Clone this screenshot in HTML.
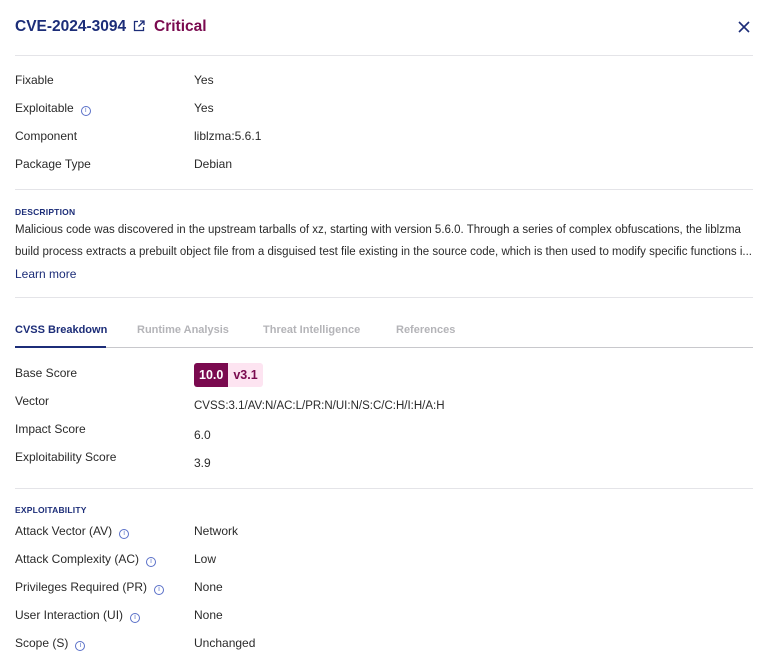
<!DOCTYPE html>
<html><head><style>
body{margin:0;width:768px;height:668px;background:#fff;font-family:"Liberation Sans",sans-serif;color:#222;position:relative;overflow:hidden}
.a{position:absolute;white-space:nowrap}
.l{font-size:12px;color:#2a2a2a}
.hr{position:absolute;left:15px;width:738px;height:1px;background:#e4e4e8}
.sec{font-size:8.5px;font-weight:bold;color:#1c2d78;letter-spacing:.2px}
.i{display:inline-block;box-sizing:border-box;width:10px;height:10px;border:1px solid #5a70c8;border-radius:50%;font-size:7px;line-height:8px;text-align:center;color:#5a70c8;margin-left:7px;vertical-align:0px}
.tab{font-size:11px;font-weight:bold;color:#b4b4b8}
</style></head><body>
<div class="a" style="left:15px;top:18px;font-size:15.5px;font-weight:bold;color:#1c2d78">CVE-2024-3094</div>
<svg class="a" style="left:133px;top:20px" width="12" height="12" viewBox="0 0 12 12"><path d="M5 1.5H1.5v9h9V7M7 1h4v4M11 1L5.5 6.5" fill="none" stroke="#1c2d78" stroke-width="1.3"/></svg>
<div class="a" style="left:154px;top:18px;font-size:15.5px;font-weight:bold;color:#7a0a4f">Critical</div>
<svg class="a" style="left:738px;top:21px" width="12" height="12" viewBox="0 0 12 12"><path d="M1 1L11 11M11 1L1 11" stroke="#1c2d78" stroke-width="1.6"/></svg>
<div class="hr" style="top:55px"></div>
<div class="a l" style="left:15px;top:73px">Fixable</div><div class="a l" style="left:194px;top:73px">Yes</div>
<div class="a l" style="left:15px;top:101px">Exploitable<span class="i">i</span></div><div class="a l" style="left:194px;top:101px">Yes</div>
<div class="a l" style="left:15px;top:129px">Component</div><div class="a l" style="left:194px;top:129px">liblzma:5.6.1</div>
<div class="a l" style="left:15px;top:157px">Package Type</div><div class="a l" style="left:194px;top:157px">Debian</div>
<div class="hr" style="top:189px"></div>
<div class="a sec" style="left:15px;top:207px">DESCRIPTION</div>
<div class="a l" style="left:15px;top:224px;font-size:11.5px">Malicious code was discovered in the upstream tarballs of xz, starting with version 5.6.0. Through a series of complex obfuscations, the liblzma</div>
<div class="a l" style="left:15px;top:246px;font-size:11.5px">build process extracts a prebuilt object file from a disguised test file existing in the source code, which is then used to modify specific functions i...</div>
<div class="a l" style="left:15px;top:267px;color:#1c2d78">Learn more</div>
<div class="hr" style="top:297px"></div>
<div class="a tab" style="left:15px;top:324px;color:#1c2d78">CVSS Breakdown</div>
<div class="a tab" style="left:137px;top:324px">Runtime Analysis</div>
<div class="a tab" style="left:263px;top:324px">Threat Intelligence</div>
<div class="a tab" style="left:396px;top:324px">References</div>
<div class="a" style="left:15px;top:347px;width:738px;height:1px;background:#c8c8cc"></div>
<div class="a" style="left:15px;top:346px;width:91px;height:2px;background:#1c2d78"></div>
<div class="a l" style="left:15px;top:366px">Base Score</div>
<div class="a" style="left:194px;top:363px;height:24px;border-radius:3px;background:#fde4f1;display:flex;font-size:12.5px;font-weight:bold;line-height:24px">
<span style="background:#7a0a4f;color:#fff;padding:0 5px;border-radius:3px 0 0 3px">10.0</span><span style="color:#7a0a4f;padding:0 5px">v3.1</span></div>
<div class="a l" style="left:15px;top:394px">Vector</div><div class="a l" style="left:194px;top:400px;font-size:11.5px">CVSS:3.1/AV:N/AC:L/PR:N/UI:N/S:C/C:H/I:H/A:H</div>
<div class="a l" style="left:15px;top:422px">Impact Score</div><div class="a l" style="left:194px;top:428px">6.0</div>
<div class="a l" style="left:15px;top:450px">Exploitability Score</div><div class="a l" style="left:194px;top:456px">3.9</div>
<div class="hr" style="top:488px"></div>
<div class="a sec" style="left:15px;top:505px">EXPLOITABILITY</div>
<div class="a l" style="left:15px;top:524px">Attack Vector (AV)<span class="i">i</span></div><div class="a l" style="left:194px;top:524px">Network</div>
<div class="a l" style="left:15px;top:552px">Attack Complexity (AC)<span class="i">i</span></div><div class="a l" style="left:194px;top:552px">Low</div>
<div class="a l" style="left:15px;top:580px">Privileges Required (PR)<span class="i">i</span></div><div class="a l" style="left:194px;top:580px">None</div>
<div class="a l" style="left:15px;top:608px">User Interaction (UI)<span class="i">i</span></div><div class="a l" style="left:194px;top:608px">None</div>
<div class="a l" style="left:15px;top:636px">Scope (S)<span class="i">i</span></div><div class="a l" style="left:194px;top:636px">Unchanged</div>
</body></html>
